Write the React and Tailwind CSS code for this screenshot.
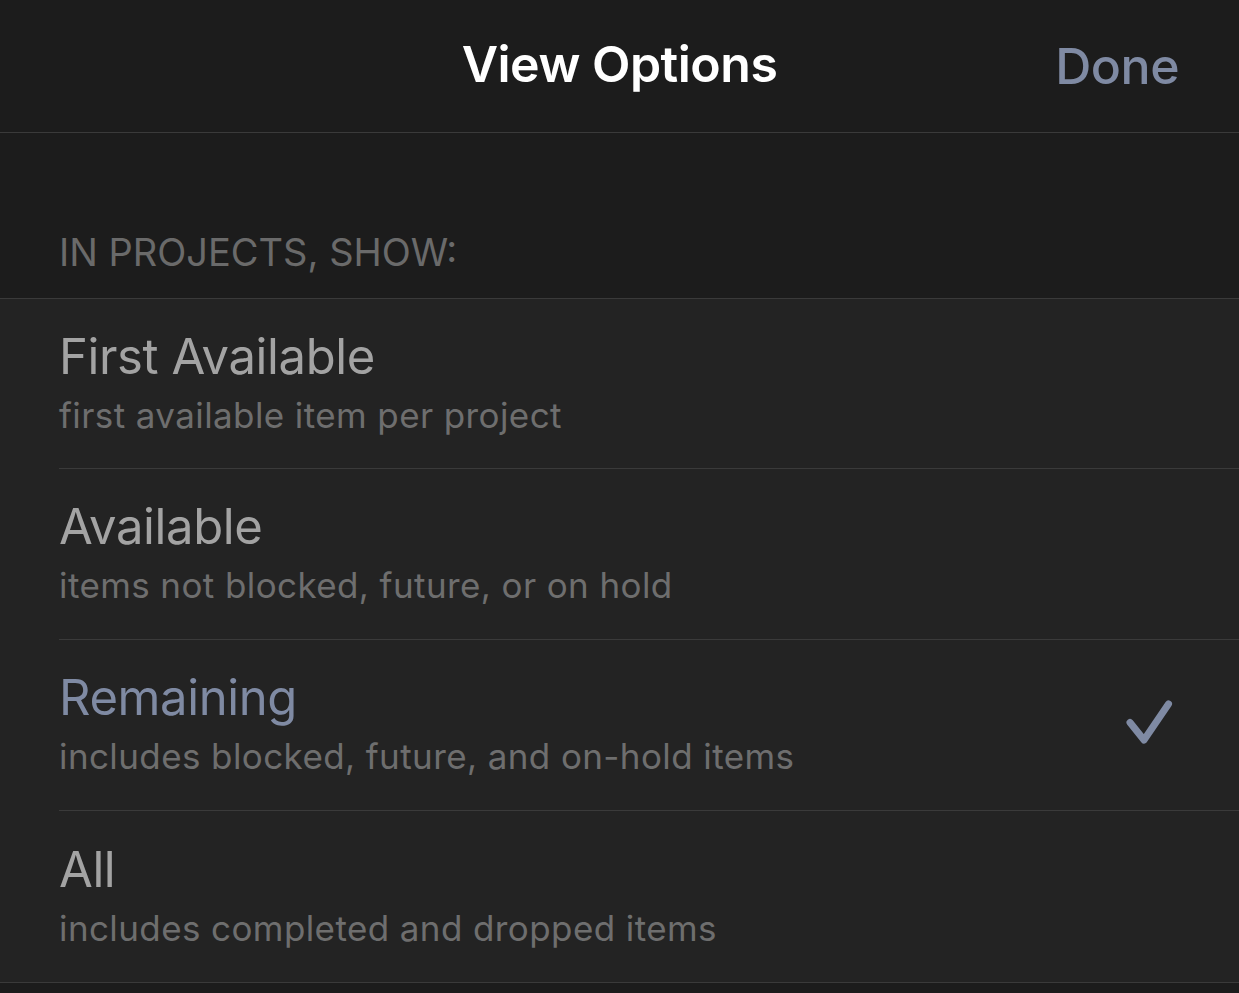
const options = [
  { title: "First Available", sub: "first available item per project" },
  { title: "Available", sub: "items not blocked, future, or on hold" },
  { title: "Remaining", sub: "includes blocked, future, and on-hold items", selected: true },
  { title: "All", sub: "includes completed and dropped items" },
];

function CheckMark() {
  return (
    <svg width="60" height="60" viewBox="0 0 60 60" fill="none" className="text-[#7f8aa3]">
      <path
        d="M11 26.5 L25 44 L49.5 8"
        stroke="currentColor"
        strokeWidth="7"
        strokeLinecap="round"
        strokeLinejoin="round"
      />
    </svg>
  );
}

export default function App() {
  return (
    <div className="min-h-[993px] bg-[#1c1c1c] font-['Inter',sans-serif] antialiased">
      {/* header */}
      <div className="relative h-[133px] border-b border-[#3a3a3a] flex items-center justify-center">
        <h1 className="text-[50px] font-semibold text-white tracking-[-0.5px] -mt-[4px]">View Options</h1>
        <button className="absolute right-[60px] top-[36px] text-[50px] font-medium text-[#7f8aa3] tracking-[-0.5px] leading-[60px]">
          Done
        </button>
      </div>

      {/* section header */}
      <div className="h-[166px] flex items-end px-[59px] pb-[27px] border-b border-[#3a3a3a]">
        <span className="text-[38px] text-[#6a6a6a] tracking-[0px] leading-none">IN PROJECTS, SHOW:</span>
      </div>

      {/* rows */}
      <div className="bg-[#232323] border-b border-[#3a3a3a]">
        {options.map((o, i) => (
          <div key={o.title} className="pl-[59px]">
            <div
              className={`${i === 0 ? "h-[170px]" : "h-[171px]"} flex items-center pr-[62px] ${i < options.length - 1 ? "border-b border-[#3a3a3a]" : ""}`}
            >
              <div className="flex-1 flex flex-col mt-[1px]">
                <span
                  className={`text-[49px] leading-[60px] tracking-[-0.4px] -mt-[4px] ${o.selected ? "text-[#7f8aa3]" : "text-[#a3a3a3]"}`}
                >
                  {o.title}
                </span>
                <span className="text-[35px] leading-[46px] text-[#6e6e6e] tracking-[0.4px] mt-[5px]">{o.sub}</span>
              </div>
              {o.selected && (
                <div className="-mr-[2px] mt-[2px]">
                  <CheckMark />
                </div>
              )}
            </div>
          </div>
        ))}
      </div>
    </div>
  );
}
